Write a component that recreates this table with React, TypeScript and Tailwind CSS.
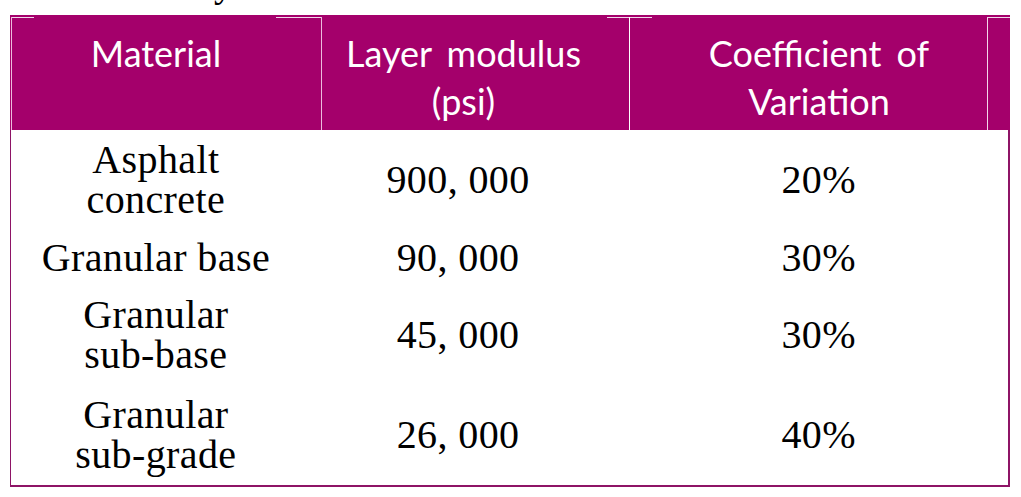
const rows = [
  { material: ["Asphalt", "concrete"], modulus: "900, 000", cov: "20%", tall: true },
  { material: ["Granular base"], modulus: "90, 000", cov: "30%", tall: false },
  { material: ["Granular", "sub-base"], modulus: "45, 000", cov: "30%", tall: true },
  { material: ["Granular", "sub-grade"], modulus: "26, 000", cov: "40%", tall: true },
];

const serif = "font-['Liberation_Serif',serif]";
const sans = "font-['Lato','Open_Sans',sans-serif]";

function Rule({ w }: { w: string }) {
  return <span className={`h-px ${w} bg-[#f3d6ea]`} />;
}

export default function App() {
  return (
    <div className="w-[1021px] h-[497px] bg-white overflow-hidden">
      {/* caption line above, only the descender is visible */}
      <div className="h-[15px] overflow-hidden">
        <div className={`${serif} text-[39px] leading-[40px] text-black pl-[214px] -mt-[37px]`}>y</div>
      </div>

      <div className="ml-[10px] w-[1000px]">
        <div className={`flex h-[115px] bg-[#a4006b] pt-[2px] pl-px text-white ${sans} text-[36px] leading-[48px] [word-spacing:6px]`}>
          <div className="flex w-[311px] flex-col border-l border-r border-[#ecbcdc]">
            <div className="flex justify-between"><Rule w="w-[22px]" /><Rule w="w-[45px]" /></div>
            <div className="pt-[11px] pr-[21px] text-center">Material</div>
          </div>
          <div className="flex w-[308px] flex-col border-r border-white">
            <div className="flex justify-end"><Rule w="w-[22px]" /></div>
            <div className="pt-[11px] pr-[24px] text-center">
              Layer modulus
              <br />
              (psi)
            </div>
          </div>
          <div className="flex w-[358px] flex-col border-r border-[#f3d6ea]">
            <div className="flex"><Rule w="w-[22px]" /></div>
            <div className="pt-[11px] pl-[21px] text-center">
              Coefficient of
              <br />
              Variation
            </div>
          </div>
          <div className="flex flex-1 flex-col">
            <Rule w="w-full" />
          </div>
        </div>

        <div className={`border-l border-r-2 border-b-2 border-[#8e1466] text-black ${serif} text-[40px] leading-[40px] tracking-[0.4px]`}>
          {rows.map((r, i) => (
            <div key={i} className={`flex items-center ${r.tall ? "h-[100px]" : "h-[55px]"}`}>
              <div className="w-[290px] text-center">
                {r.material.map((m) => (
                  <div key={m}>{m}</div>
                ))}
              </div>
              <div className="w-[329px] pr-[14px] text-center">{r.modulus}</div>
              <div className="w-[379px] text-center">{r.cov}</div>
            </div>
          ))}
        </div>
      </div>
    </div>
  );
}
